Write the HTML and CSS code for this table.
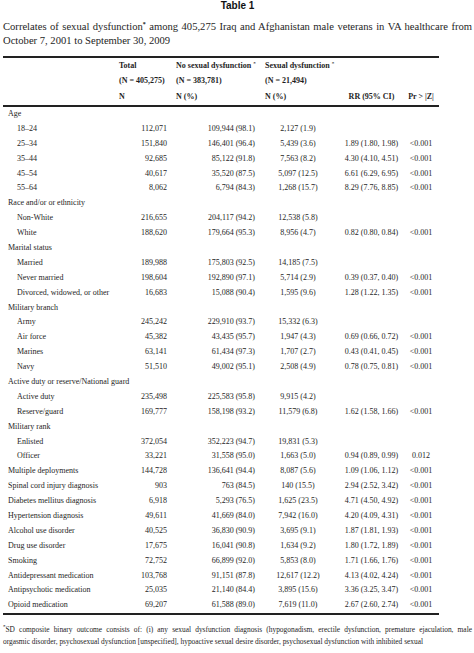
FILE: index.html
```html
<!DOCTYPE html>
<html lang="en">
<head>
<meta charset="utf-8">
<title>Table 1</title>
<link rel="stylesheet" href="styles.css">
</head>
<body>
<h1 class="title">Table 1</h1>
<p class="caption"><span class="just">Correlates of sexual dysfunction<sup class="star">*</sup> among 405,275 Iraq and Afghanistan male veterans in VA healthcare from</span><span class="plain">October 7, 2001 to September 30, 2009</span></p>
<table class="data">
<colgroup>
<col class="c-label"><col class="c-total"><col class="c-nosd"><col class="c-sd"><col class="c-rr"><col class="c-pr">
</colgroup>
<thead>
<tr class="h1"><th></th><th class="hl-total">Total</th><th class="hl-nosd">No sexual dysfunction<sup class="hstar">*</sup></th><th class="hl-sd">Sexual dysfunction<sup class="hstar">*</sup></th><th></th><th></th></tr>
<tr class="h2"><th></th><th class="hl-total">(N = 405,275)</th><th class="hl-nosd">(N = 383,781)</th><th class="hl-sd">(N = 21,494)</th><th></th><th></th></tr>
<tr class="h3"><th></th><th class="hl-total">N</th><th class="hl-nosd">N (%)</th><th class="hl-sd">N (%)</th><th class="hc">RR (95% CI)</th><th class="hc">Pr &gt; |Z|</th></tr>
</thead>
<tbody>
<tr><td class="cat" colspan="6">Age</td></tr>
<tr><td class="sub">18–24</td><td class="num">112,071</td><td class="num2">109,944 (98.1)</td><td class="ctr sdc">2,127 (1.9)</td><td class="ctr"></td><td class="ctr"></td></tr>
<tr><td class="sub">25–34</td><td class="num">151,840</td><td class="num2">146,401 (96.4)</td><td class="ctr sdc">5,439 (3.6)</td><td class="ctr">1.89 (1.80, 1.98)</td><td class="ctr">&lt;0.001</td></tr>
<tr><td class="sub">35–44</td><td class="num">92,685</td><td class="num2">85,122 (91.8)</td><td class="ctr sdc">7,563 (8.2)</td><td class="ctr">4.30 (4.10, 4.51)</td><td class="ctr">&lt;0.001</td></tr>
<tr><td class="sub">45–54</td><td class="num">40,617</td><td class="num2">35,520 (87.5)</td><td class="ctr sdc">5,097 (12.5)</td><td class="ctr">6.61 (6.29, 6.95)</td><td class="ctr">&lt;0.001</td></tr>
<tr><td class="sub">55–64</td><td class="num">8,062</td><td class="num2">6,794 (84.3)</td><td class="ctr sdc">1,268 (15.7)</td><td class="ctr">8.29 (7.76, 8.85)</td><td class="ctr">&lt;0.001</td></tr>
<tr><td class="cat" colspan="6">Race and/or or ethnicity</td></tr>
<tr><td class="sub">Non-White</td><td class="num">216,655</td><td class="num2">204,117 (94.2)</td><td class="ctr sdc">12,538 (5.8)</td><td class="ctr"></td><td class="ctr"></td></tr>
<tr><td class="sub">White</td><td class="num">188,620</td><td class="num2">179,664 (95.3)</td><td class="ctr sdc">8,956 (4.7)</td><td class="ctr">0.82 (0.80, 0.84)</td><td class="ctr">&lt;0.001</td></tr>
<tr><td class="cat" colspan="6">Marital status</td></tr>
<tr><td class="sub">Married</td><td class="num">189,988</td><td class="num2">175,803 (92.5)</td><td class="ctr sdc">14,185 (7.5)</td><td class="ctr"></td><td class="ctr"></td></tr>
<tr><td class="sub">Never married</td><td class="num">198,604</td><td class="num2">192,890 (97.1)</td><td class="ctr sdc">5,714 (2.9)</td><td class="ctr">0.39 (0.37, 0.40)</td><td class="ctr">&lt;0.001</td></tr>
<tr><td class="sub">Divorced, widowed, or other</td><td class="num">16,683</td><td class="num2">15,088 (90.4)</td><td class="ctr sdc">1,595 (9.6)</td><td class="ctr">1.28 (1.22, 1.35)</td><td class="ctr">&lt;0.001</td></tr>
<tr><td class="cat" colspan="6">Military branch</td></tr>
<tr><td class="sub">Army</td><td class="num">245,242</td><td class="num2">229,910 (93.7)</td><td class="ctr sdc">15,332 (6.3)</td><td class="ctr"></td><td class="ctr"></td></tr>
<tr><td class="sub">Air force</td><td class="num">45,382</td><td class="num2">43,435 (95.7)</td><td class="ctr sdc">1,947 (4.3)</td><td class="ctr">0.69 (0.66, 0.72)</td><td class="ctr">&lt;0.001</td></tr>
<tr><td class="sub">Marines</td><td class="num">63,141</td><td class="num2">61,434 (97.3)</td><td class="ctr sdc">1,707 (2.7)</td><td class="ctr">0.43 (0.41, 0.45)</td><td class="ctr">&lt;0.001</td></tr>
<tr><td class="sub">Navy</td><td class="num">51,510</td><td class="num2">49,002 (95.1)</td><td class="ctr sdc">2,508 (4.9)</td><td class="ctr">0.78 (0.75, 0.81)</td><td class="ctr">&lt;0.001</td></tr>
<tr><td class="cat" colspan="6">Active duty or reserve/National guard</td></tr>
<tr><td class="sub">Active duty</td><td class="num">235,498</td><td class="num2">225,583 (95.8)</td><td class="ctr sdc">9,915 (4.2)</td><td class="ctr"></td><td class="ctr"></td></tr>
<tr><td class="sub">Reserve/guard</td><td class="num">169,777</td><td class="num2">158,198 (93.2)</td><td class="ctr sdc">11,579 (6.8)</td><td class="ctr">1.62 (1.58, 1.66)</td><td class="ctr">&lt;0.001</td></tr>
<tr><td class="cat" colspan="6">Military rank</td></tr>
<tr><td class="sub">Enlisted</td><td class="num">372,054</td><td class="num2">352,223 (94.7)</td><td class="ctr sdc">19,831 (5.3)</td><td class="ctr"></td><td class="ctr"></td></tr>
<tr><td class="sub">Officer</td><td class="num">33,221</td><td class="num2">31,558 (95.0)</td><td class="ctr sdc">1,663 (5.0)</td><td class="ctr">0.94 (0.89, 0.99)</td><td class="ctr">0.012</td></tr>
<tr><td class="cat">Multiple deployments</td><td class="num">144,728</td><td class="num2">136,641 (94.4)</td><td class="ctr sdc">8,087 (5.6)</td><td class="ctr">1.09 (1.06, 1.12)</td><td class="ctr">&lt;0.001</td></tr>
<tr><td class="cat">Spinal cord injury diagnosis</td><td class="num">903</td><td class="num2">763 (84.5)</td><td class="ctr sdc">140 (15.5)</td><td class="ctr">2.94 (2.52, 3.42)</td><td class="ctr">&lt;0.001</td></tr>
<tr><td class="cat">Diabetes mellitus diagnosis</td><td class="num">6,918</td><td class="num2">5,293 (76.5)</td><td class="ctr sdc">1,625 (23.5)</td><td class="ctr">4.71 (4.50, 4.92)</td><td class="ctr">&lt;0.001</td></tr>
<tr><td class="cat">Hypertension diagnosis</td><td class="num">49,611</td><td class="num2">41,669 (84.0)</td><td class="ctr sdc">7,942 (16.0)</td><td class="ctr">4.20 (4.09, 4.31)</td><td class="ctr">&lt;0.001</td></tr>
<tr><td class="cat">Alcohol use disorder</td><td class="num">40,525</td><td class="num2">36,830 (90.9)</td><td class="ctr sdc">3,695 (9.1)</td><td class="ctr">1.87 (1.81, 1.93)</td><td class="ctr">&lt;0.001</td></tr>
<tr><td class="cat">Drug use disorder</td><td class="num">17,675</td><td class="num2">16,041 (90.8)</td><td class="ctr sdc">1,634 (9.2)</td><td class="ctr">1.80 (1.72, 1.89)</td><td class="ctr">&lt;0.001</td></tr>
<tr><td class="cat">Smoking</td><td class="num">72,752</td><td class="num2">66,899 (92.0)</td><td class="ctr sdc">5,853 (8.0)</td><td class="ctr">1.71 (1.66, 1.76)</td><td class="ctr">&lt;0.001</td></tr>
<tr><td class="cat">Antidepressant medication</td><td class="num">103,768</td><td class="num2">91,151 (87.8)</td><td class="ctr sdc">12,617 (12.2)</td><td class="ctr">4.13 (4.02, 4.24)</td><td class="ctr">&lt;0.001</td></tr>
<tr><td class="cat">Antipsychotic medication</td><td class="num">25,035</td><td class="num2">21,140 (84.4)</td><td class="ctr sdc">3,895 (15.6)</td><td class="ctr">3.36 (3.25, 3.47)</td><td class="ctr">&lt;0.001</td></tr>
<tr class="last"><td class="cat">Opioid medication</td><td class="num">69,207</td><td class="num2">61,588 (89.0)</td><td class="ctr sdc">7,619 (11.0)</td><td class="ctr">2.67 (2.60, 2.74)</td><td class="ctr">&lt;0.001</td></tr>
</tbody>
</table>
<p class="footnote"><span class="just"><sup class="fstar">*</sup>SD composite binary outcome consists of: (i) any sexual dysfunction diagnosis (hypogonadism, erectile dysfunction, premature ejaculation, male</span><span class="plain">orgasmic disorder, psychosexual dysfunction [unspecified], hypoactive sexual desire disorder, psychosexual dysfunction with inhibited sexual</span></p>
</body>
</html>
```

FILE: styles.css
```css
html, body {
  margin: 0;
  padding: 0;
  background: #ffffff;
}
body {
  padding: 0 2px 0 3px;
  color: #1e1e1e;
  font-family: "Liberation Serif", "Times New Roman", serif;
  overflow: hidden;
}
.title {
  margin: 0;
  font-family: "Liberation Sans", Arial, sans-serif;
  font-weight: bold;
  font-size: 10px;
  line-height: 12px;
  text-align: center;
  color: #111;
}
.just {
  display: block;
  white-space: nowrap;
  text-align: justify;
  text-align-last: justify;
}
.caption .just, .footnote .just {
  white-space: normal;
}
.plain {
  display: block;
  white-space: nowrap;
}
.caption {
  margin: 8px 0 0;
  font-size: 10.6px;
  line-height: 14px;
}
.star {
  font-size: 6px;
  vertical-align: 4px;
  line-height: 0;
  font-weight: bold;
}
.data {
  margin-top: 8px;
  border-collapse: separate;
  border-spacing: 0;
  table-layout: fixed;
  width: 436px;
  border-top: 2px solid #222;
  border-bottom: 2px solid #222;
  font-size: 8px;
  line-height: 10px;
}
.c-label { width: 114px; }
.c-total { width: 55px; }
.c-nosd { width: 90px; }
.c-sd { width: 78px; }
.c-rr { width: 63px; }
.c-pr { width: 36px; }
.data th, .data td {
  padding: 0;
  white-space: nowrap;
  vertical-align: middle;
}
.data th {
  font-weight: bold;
  text-align: left;
}
.data thead tr { height: 15.5px; }
.data thead tr.h3 th { border-bottom: 2px solid #222; }
.data thead tr.h3 { height: 17.5px; }
.data th.hl-total { padding-left: 2px; }
.data th.hl-nosd { padding-left: 4px; }
.data th.hl-sd { padding-left: 3px; }
.data th.hc { text-align: center; }
.hstar {
  font-size: 5px;
  vertical-align: 3px;
  line-height: 0;
  margin-left: 2px;
}
.data tbody tr { height: 14.9px; }
.data td.cat { padding-left: 5px; }
.data td.sub { padding-left: 14px; }
.data td.num { text-align: right; padding-right: 5px; }
.data td.num2 { text-align: right; padding-right: 7px; }
.data td.ctr { text-align: center; }
.data td.sdc { padding-right: 6px; }
.footnote {
  margin: 9px 0 0;
  font-size: 7.4px;
  line-height: 12px;
}
.fstar {
  font-size: 5px;
  vertical-align: 4px;
  line-height: 0;
  font-weight: bold;
}
```
